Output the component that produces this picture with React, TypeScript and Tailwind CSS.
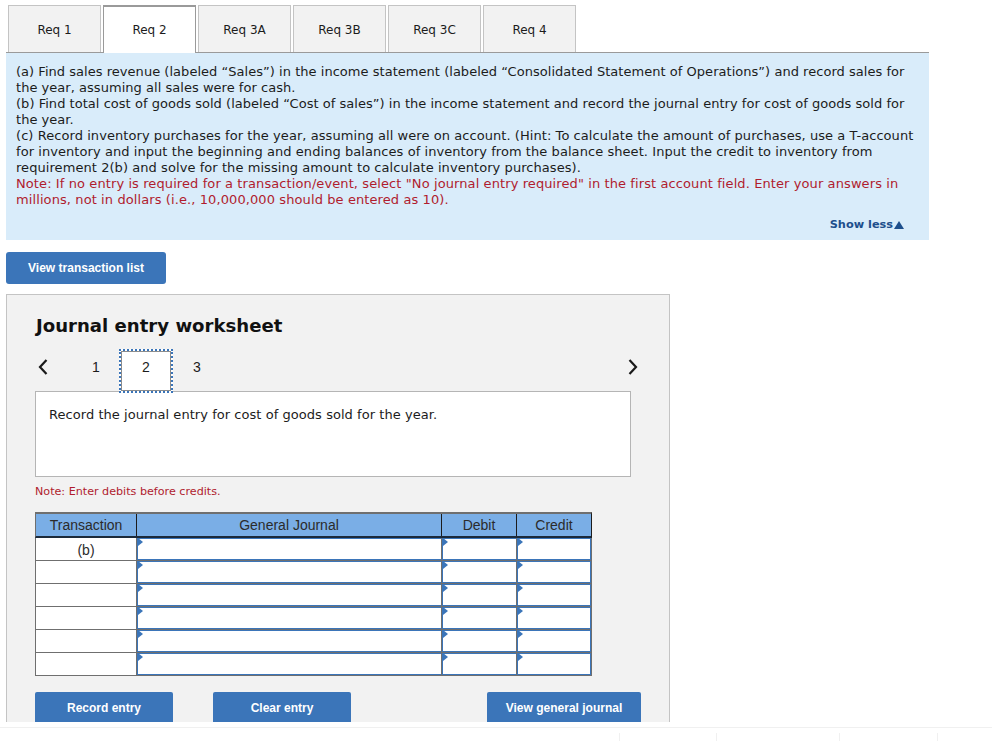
import React from "react";

const tabs = ["Req 1", "Req 2", "Req 3A", "Req 3B", "Req 3C", "Req 4"];
const rows = ["(b)", "", "", "", "", ""];

const InputCell = ({ className, inner }: { className: string; inner: string }) => (
    <div className={`${className} h-full border-r border-b border-[#6f6f6f]`}>
        <div className={`${inner} h-full border-l border-t border-b border-[#3b75b9] bg-white`}>
            <div className="w-0 h-0 border-y-[4px] border-y-transparent border-l-[5px] border-l-[#3b75b9] -mt-[1px]" />
        </div>
    </div>
);

export default function App() {
    return (
        <div className="h-[741px] w-[992px] overflow-hidden bg-white font-['DejaVu_Sans',Verdana,sans-serif] text-[13px] text-[#1c1c1c]">
            <div className="h-[722px] overflow-hidden pt-[5px] pl-[6px]">
                <div className="w-[923px]">
                    <div className="flex h-[48px] gap-[2px] pl-[2px] border-b border-[#9a9a9a]">
                        {tabs.map((tab, i) => (
                            <div
                                key={tab}
                                className={
                                    i === 1
                                        ? "w-[93px] h-[48px] flex items-center justify-center text-[12px] bg-white border border-b-0 border-[#9a9a9a] border-t-2"
                                        : "w-[93px] h-[47px] flex items-center justify-center pt-[1px] text-[12px] bg-[#f2f2f2] border border-b-0 border-[#c4c4c4]"
                                }
                            >
                                {tab}
                            </div>
                        ))}
                    </div>
                    <div className="h-[187px] bg-[#d9ecfa] pt-[11px] pl-[10px] pr-[10px] leading-[16px] tracking-[0.032px]">
                        <p>(a) Find sales revenue (labeled “Sales”) in the income statement (labeled “Consolidated Statement of Operations”) and record sales for the year, assuming all sales were for cash.</p>
                        <p>(b) Find total cost of goods sold (labeled “Cost of sales”) in the income statement and record the journal entry for cost of goods sold for the year.</p>
                        <p className="tracking-[0.065px]">(c) Record inventory purchases for the year, assuming all were on account. (Hint: To calculate the amount of purchases, use a T-account for inventory and input the beginning and ending balances of inventory from the balance sheet. Input the credit to inventory from requirement 2(b) and solve for the missing amount to calculate inventory purchases).</p>
                        <p className="text-[#b01c2e] tracking-[0.097px]">Note: If no entry is required for a transaction/event, select "No journal entry required" in the first account field. Enter your answers in millions, not in dollars (i.e., 10,000,000 should be entered as 10).</p>
                        <div className="mt-[9px] mr-[15px] flex justify-end items-center text-[11.3px] font-bold tracking-normal text-[#1d4f8c]">
                            Show less
                            <svg width="10" height="8" viewBox="0 0 10 8" className="ml-[1px]"><path d="M5 0 L10 8 L0 8 Z" fill="#1d4f8c" /></svg>
                        </div>
                    </div>
                </div>

                <button
                    type="button"
                    className="mt-[12px] block w-[160px] h-[32px] rounded-[3px] bg-[#3b75b9] font-['Liberation_Sans',Arial,sans-serif] text-[12px] font-bold text-white text-center"
                >
                    View transaction list
                </button>

                <div className="mt-[10px] w-[664px] h-[500px] bg-[#f2f2f2] border border-[#c4c4c4] pl-[28px] pt-[20px]">
                    <h2 className="pl-[1px] text-[18.1px] leading-[22px] font-bold text-[#111]">Journal entry worksheet</h2>

                    <div className="mt-[13px] w-[603px] h-[41px] flex items-center relative font-['Liberation_Sans',Arial,sans-serif] text-[14px]">
                        <svg width="12" height="18" viewBox="0 0 12 18" className="ml-[2px] mr-[40px] mb-[7px]"><path d="M9.5 2 L3 9 L9.5 16" fill="none" stroke="#1a1a1a" strokeWidth="2.2" /></svg>
                        <span className="w-[14px] text-center mb-[7px]">1</span>
                        <div className="ml-[16px] w-[54px] h-[44px] -mt-[1px] self-start z-10 flex items-center justify-center pb-[7px] bg-white border-[2px] border-dotted border-[#3b75b9] outline outline-1 outline-[#8c8c8c] -outline-offset-[3px]">2</div>
                        <span className="ml-[14px] w-[20px] text-center mb-[7px]">3</span>
                        <svg width="12" height="18" viewBox="0 0 12 18" className="ml-auto mr-[-1px] mb-[7px]"><path d="M2.5 2 L9 9 L2.5 16" fill="none" stroke="#1a1a1a" strokeWidth="2.2" /></svg>
                    </div>

                    <div className="w-[596px] h-[86px] border border-[#b5b5b5] bg-white pl-[13px] pt-[15px] leading-[16px] tracking-[0.05px]">
                        Record the journal entry for cost of goods sold for the year.
                    </div>

                    <p className="mt-[8px] text-[11.15px] leading-[14px] text-[#b01c2e]">Note: Enter debits before credits.</p>

                    <div className="mt-[13px] w-[557px] font-['Liberation_Sans',Arial,sans-serif] text-[14px] text-[#2b2b2b]">
                        <div className="flex h-[26px] bg-[#7aaee6] border-t-2 border-t-[#6f6f6f] border-b-2 border-b-[#1c2a3a] border-l border-l-[#6f6f6f] border-r border-r-[#1c1c1c] items-center text-center">
                            <div className="w-[101px] h-full border-r border-[#1c1c1c] leading-[22px]">Transaction</div>
                            <div className="w-[305px] h-full border-r border-[#1c1c1c] leading-[22px]">General Journal</div>
                            <div className="w-[75px] h-full border-r border-[#1c1c1c] leading-[22px]">Debit</div>
                            <div className="flex-1 h-full leading-[22px]">Credit</div>
                        </div>
                        {rows.map((row, i) => (
                            <div key={i} className="flex h-[23px]">
                                <div className="w-[102px] h-full bg-white border-l border-r border-b border-[#6f6f6f] text-center leading-[24px]">{row}</div>
                                <InputCell className="w-[305px]" inner="" />
                                <InputCell className="w-[75px]" inner="" />
                                <InputCell className="w-[75px]" inner="border-r" />
                            </div>
                        ))}
                    </div>

                    <div className="mt-[16px] w-[606px] flex justify-between font-['Liberation_Sans',Arial,sans-serif] text-[12px] font-bold text-white">
                        <div className="flex">
                            <button type="button" className="w-[138px] h-[32px] rounded-t-[2px] bg-[#3b75b9]">Record entry</button>
                            <button type="button" className="ml-[40px] w-[138px] h-[32px] rounded-t-[2px] bg-[#3b75b9]">Clear entry</button>
                        </div>
                        <button type="button" className="w-[154px] h-[32px] rounded-t-[2px] bg-[#3b75b9]">View general journal</button>
                    </div>
                </div>
            </div>
            <div className="mt-[5px] h-[14px] border-t border-[#f0f0f0] pt-[5px] flex">
                <div className="ml-[619px] w-[97px] h-[9px] border-l border-[#f0f0f0]" />
                <div className="w-[123px] h-[9px] border-l border-[#f0f0f0]" />
                <div className="w-[98px] h-[9px] border-l border-[#f0f0f0]" />
                <div className="w-[55px] h-[9px] border-l border-[#f0f0f0]" />
            </div>
        </div>
    );
}
